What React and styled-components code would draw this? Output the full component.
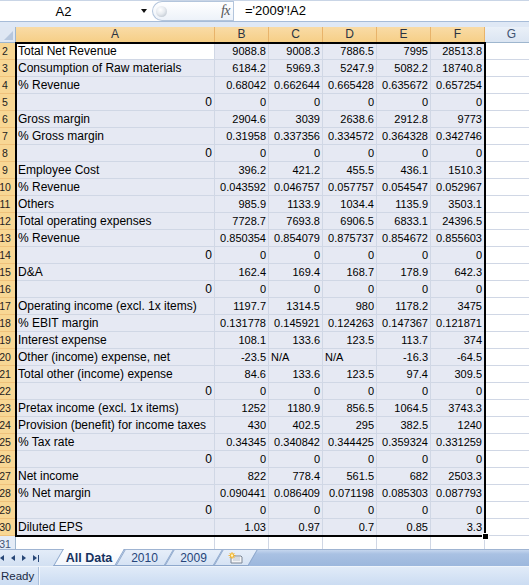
import React from 'react'
import styled, { createGlobalStyle } from 'styled-components'

const GlobalStyle = createGlobalStyle`
	html, body { margin: 0; padding: 0; background: #fff; }
	body { font-family: "Liberation Sans", Arial, sans-serif; color: #000; }
`

const Z = ['0', '0', '0', '0', '0', '0']

const data = [
	['Total Net Revenue', '9088.8', '9008.3', '7886.5', '7995', '28513.8'],
	['Consumption of Raw materials', '6184.2', '5969.3', '5247.9', '5082.2', '18740.8'],
	['% Revenue', '0.68042', '0.662644', '0.665428', '0.635672', '0.657254'],
	Z,
	['Gross margin', '2904.6', '3039', '2638.6', '2912.8', '9773'],
	['% Gross margin', '0.31958', '0.337356', '0.334572', '0.364328', '0.342746'],
	Z,
	['Employee Cost', '396.2', '421.2', '455.5', '436.1', '1510.3'],
	['% Revenue', '0.043592', '0.046757', '0.057757', '0.054547', '0.052967'],
	['Others', '985.9', '1133.9', '1034.4', '1135.9', '3503.1'],
	['Total operating expenses', '7728.7', '7693.8', '6906.5', '6833.1', '24396.5'],
	['% Revenue', '0.850354', '0.854079', '0.875737', '0.854672', '0.855603'],
	Z,
	['D&A', '162.4', '169.4', '168.7', '178.9', '642.3'],
	Z,
	['Operating income (excl. 1x items)', '1197.7', '1314.5', '980', '1178.2', '3475'],
	['% EBIT margin', '0.131778', '0.145921', '0.124263', '0.147367', '0.121871'],
	['Interest expense', '108.1', '133.6', '123.5', '113.7', '374'],
	['Other (income) expense, net', '-23.5', 'N/A', 'N/A', '-16.3', '-64.5'],
	['Total other (income) expense', '84.6', '133.6', '123.5', '97.4', '309.5'],
	Z,
	['Pretax income (excl. 1x items)', '1252', '1180.9', '856.5', '1064.5', '3743.3'],
	['Provision (benefit) for income taxes', '430', '402.5', '295', '382.5', '1240'],
	['% Tax rate', '0.34345', '0.340842', '0.344425', '0.359324', '0.331259'],
	Z,
	['Net income', '822', '778.4', '561.5', '682', '2503.3'],
	['% Net margin', '0.090441', '0.086409', '0.071198', '0.085303', '0.087793'],
	Z,
	['Diluted EPS', '1.03', '0.97', '0.7', '0.85', '3.3'],
]

const cols = ['A', 'B', 'C', 'D', 'E', 'F', 'G']

const Window = styled.div`
	width: 529px;
	height: 585px;
	overflow: hidden;
	display: flex;
	flex-direction: column;
	background: #fff;
`

const FormulaBar = styled.div`
	display: flex;
	align-items: stretch;
	height: 22px;
	box-sizing: border-box;
	border-top: 1px solid #c9d5e6;
	border-bottom: 1px solid #a7bcd8;
	background: #fff;
	font-size: 13px;
`

const NameBox = styled.div`
	width: 150px;
	display: flex;
	align-items: center;
`

const NameText = styled.span`
	flex: 0 0 127px;
	text-align: center;
`

const DropArrow = styled.span`
	margin-left: 14px;
	width: 0;
	height: 0;
	border-left: 3px solid transparent;
	border-right: 3px solid transparent;
	border-top: 4px solid #111;
`

const FxBox = styled.div`
	width: 81px;
	margin-left: 2px;
	box-sizing: border-box;
	border: 1px solid #b3c5dc;
	border-right: none;
	border-radius: 11px 0 0 11px;
	background: linear-gradient(#ffffff, #edf2f9);
	display: flex;
	align-items: center;
	padding: 0 3px 0 3px;
`

const Bulb = styled.span`
	width: 11px;
	height: 11px;
	border-radius: 50%;
	background: radial-gradient(circle at 40% 35%, #ffffff 0%, #e6eaef 45%, #aeb8c4 100%);
`

const Fx = styled.span`
	margin-left: auto;
	font-family: "Liberation Serif", "Times New Roman", serif;
	font-style: italic;
	font-size: 14px;
	color: #555;
	letter-spacing: -0.5px;
`

const FormulaText = styled.div`
	flex: 1;
	border-left: 1px solid #b3c5dc;
	padding-left: 11px;
	line-height: 20px;
`

const Band = styled.div`
	height: 5px;
	background: #dfe8f5;
`

const Sheet = styled.div`
	position: relative;
	height: 522px;
	overflow: hidden;
	display: grid;
	grid-template-columns: 16px 199px repeat(6, 54px);
	grid-template-rows: 16px;
	grid-auto-rows: 17px;
	flex: none;
`

const Corner = styled.div`
	position: relative;
	background: #dfe7f3;
	border-right: 1px solid #9eb6ce;
	border-bottom: 1px solid #9eb6ce;
	&::after {
		content: '';
		position: absolute;
		right: 2px;
		bottom: 2px;
		border-left: 9px solid transparent;
		border-bottom: 9px solid #b7c7dd;
	}
`

const ColHead = styled.div`
	box-sizing: border-box;
	background: ${p => p.$on ? 'linear-gradient(#f9dba6, #f6cf87)' : 'linear-gradient(#eaf0f8, #dbe5f2)'};
	border-right: 1px solid ${p => p.$on ? '#e8b36a' : '#c2cfe0'};
	border-bottom: 1px solid ${p => p.$on ? '#f2a54a' : '#9eb6ce'};
	text-align: center;
	font-size: 12px;
	line-height: 15px;
	color: ${p => p.$on ? '#2a3342' : '#3f5371'};
`

const RowHead = styled.div`
	box-sizing: border-box;
	display: flex;
	justify-content: center;
	padding-right: 5px;
	overflow: hidden;
	background: ${p => p.$on ? '#f8d794' : '#e4ecf7'};
	border-right: 1px solid ${p => p.$on ? '#f29436' : '#9eb6ce'};
	border-bottom: 1px solid ${p => p.$on ? '#efc27c' : '#c5d2e3'};
	font-size: 10.5px;
	line-height: 16px;
	color: ${p => p.$on ? '#222' : '#3f5371'};
`

const Cell = styled.div`
	box-sizing: border-box;
	border-right: 1px solid #d0d7e5;
	border-bottom: 1px solid #d0d7e5;
	background: ${p => p.$active ? '#fff' : p.$sel ? '#e6e9f3' : '#fff'};
	text-align: ${p => p.$left ? 'left' : 'right'};
	font-size: ${p => p.$label ? '12px' : '11px'};
	line-height: 16px;
	padding: 0 2px;
	white-space: nowrap;
	overflow: hidden;
`

const Selection = styled.div`
	position: absolute;
	left: 15px;
	top: 15px;
	width: 471px;
	height: 495px;
	box-sizing: border-box;
	border: 2px solid #000;
	pointer-events: none;
`

const FillHandle = styled.div`
	position: absolute;
	right: -5px;
	bottom: -5px;
	width: 5px;
	height: 5px;
	background: #000;
	border: 1px solid #fff;
`

const TabBar = styled.div`
	height: 17px;
	display: flex;
	box-sizing: border-box;
	border-top: 1px solid #9fb4d2;
	background: linear-gradient(#e3ecf8, #d2e0f2);
	font-size: 12px;
`

const Nav = styled.div`
	width: 58px;
	display: flex;
	align-items: center;
	gap: 7px;
	padding-left: 0;
`

const NavArrow = styled.span`
	display: flex;
	align-items: center;
	gap: 1px;
	&::after {
		content: '';
		display: ${p => p.$bar ? 'block' : 'none'};
		width: 1px;
		height: 7px;
		background: #284777;
		order: 2;
	}
`

const Tri = styled.span`
	width: 0;
	height: 0;
	border-top: 3.5px solid transparent;
	border-bottom: 3.5px solid transparent;
	${p => p.$dir === 'left' ? 'border-right: 4px solid #284777;' : 'border-left: 4px solid #284777;'}
	order: 1;
`

const Tabs = styled.div`
	display: flex;
	height: 100%;
	position: relative;
	z-index: 1;
`

const Tab = styled.div`
	position: relative;
	width: ${p => p.$w}px;
	display: flex;
	align-items: center;
	justify-content: center;
	font-weight: ${p => p.$active ? 700 : 400};
	font-size: ${p => p.$active ? '12.5px' : '12px'};
	color: ${p => p.$active ? '#15315f' : '#26457a'};
	z-index: ${p => p.$active ? 2 : 1};
	margin-top: ${p => p.$active ? '-1px' : '0'};
	&::before {
		content: '';
		position: absolute;
		inset: 0 0 0 0;
		transform: skewX(-30deg);
		background: ${p => p.$active ? 'linear-gradient(#ffffff, #f2f6fc)' : 'linear-gradient(#e6eef9, #d6e3f4)'};
		border-left: 1px solid #8ea8cc;
		border-right: 1px solid #8ea8cc;
		border-bottom: 1px solid #8ea8cc;
		z-index: -1;
	}
`

const TabFiller = styled.div`
	flex: 1;
	margin-left: -6px;
	background: linear-gradient(#c5d6ee 0%, #a9c1e3 25%, #9cb7dd 100%);
`

const StatusBar = styled.div`
	flex: 1;
	display: flex;
	align-items: center;
	background: linear-gradient(#e1ebf8, #cbdcf2);
	border-top: 1px solid #eef4fb;
	font-size: 11.5px;
	color: #1a2b45;
`

const Ready = styled.span`
	width: 39px;
	padding-left: 1px;
	box-sizing: border-box;
	border-right: 1px solid #a9bfdc;
	box-shadow: 1px 0 0 #f3f7fc;
	line-height: 18px;
`

const NewSheetIcon = () => (
	<svg width="16" height="13" viewBox="0 0 16 13">
		<path d="M3 4 L13 4 L14 5 L14 11 L3 11 Z" fill="#f3f4f6" stroke="#7d8796" strokeWidth="1" />
		<path d="M5 6 H12 M5 8 H12" stroke="#b9c1cc" strokeWidth="1" />
		<circle cx="4" cy="3.5" r="2.2" fill="#f7c232" />
		<path d="M4 0 V7 M0.5 3.5 H7.5 M1.5 1 L6.5 6 M6.5 1 L1.5 6" stroke="#f2a81d" strokeWidth="0.8" />
		<circle cx="4" cy="3.5" r="1.2" fill="#fff6c8" />
	</svg>
)

const isNum = v => v !== '' && !isNaN(Number(v))

const App = () => {
	return (
		<Window>
			<GlobalStyle />
			<FormulaBar>
				<NameBox>
					<NameText>A2</NameText>
					<DropArrow />
				</NameBox>
				<FxBox>
					<Bulb />
					<Fx>fx</Fx>
				</FxBox>
				<FormulaText>='2009'!A2</FormulaText>
			</FormulaBar>
			<Band />
			<Sheet>
				<Corner />
				{cols.map(c => (
					<ColHead key={c} $on={c !== 'G'}>{c}</ColHead>
				))}
				{data.map((row, i) => (
					<React.Fragment key={i}>
						<RowHead $on>{i + 2}</RowHead>
						{row.map((v, j) => (
							<Cell
								key={j}
								$sel
								$active={i === 0 && j === 0}
								$label={j === 0}
								$left={!isNum(v)}
							>
								{v}
							</Cell>
						))}
						<Cell />
					</React.Fragment>
				))}
				<RowHead>31</RowHead>
				{cols.map(c => <Cell key={c} />)}
				<Selection>
					<FillHandle />
				</Selection>
			</Sheet>
			<TabBar>
				<Nav>
					<NavArrow><Tri $dir="left" /></NavArrow>
					<NavArrow><Tri $dir="left" /></NavArrow>
					<NavArrow><Tri $dir="right" /></NavArrow>
					<NavArrow $bar><Tri $dir="right" /></NavArrow>
				</Nav>
				<Tabs>
					<Tab $w={62} $active>All Data</Tab>
					<Tab $w={49}>2010</Tab>
					<Tab $w={49}>2009</Tab>
					<Tab $w={35}><NewSheetIcon /></Tab>
				</Tabs>
				<TabFiller />
			</TabBar>
			<StatusBar>
				<Ready>Ready</Ready>
			</StatusBar>
		</Window>
	)
}

export default App
